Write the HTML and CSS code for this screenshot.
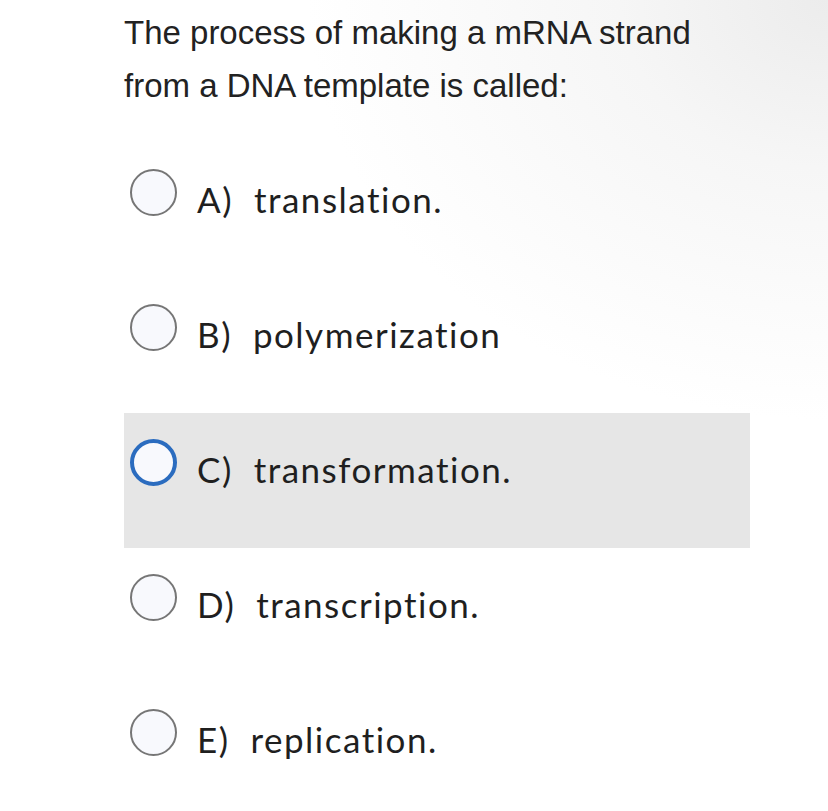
FILE: index.html
```html
<!DOCTYPE html>
<html>
<head>
<meta charset="utf-8">
<link rel="stylesheet" href="styles.css">
</head>
<body>
<div class="page">
  <p class="question">The process of making a mRNA strand<br>from a DNA template is called:</p>
  <ul class="options">
    <li class="option"><span class="radio"></span><span class="label">A)&nbsp; translation.</span></li>
    <li class="option"><span class="radio"></span><span class="label">B)&nbsp; polymerization</span></li>
    <li class="option selected"><span class="radio"></span><span class="label">C)&nbsp; transformation.</span></li>
    <li class="option"><span class="radio"></span><span class="label">D)&nbsp; transcription.</span></li>
    <li class="option"><span class="radio"></span><span class="label">E)&nbsp; replication.</span></li>
  </ul>
</div>
</body>
</html>
```
FILE: styles.css
```css
html, body {
  margin: 0;
  padding: 0;
}
body {
  width: 828px;
  height: 811px;
  overflow: hidden;
  background: radial-gradient(ellipse 520px 420px at 100% 0%, #ececec 0%, #f6f6f6 40%, #ffffff 100%);
}
.page {
  padding-left: 124px;
  width: 626px;
}
.question {
  margin: 0;
  padding-top: 6px;
  font-family: "Liberation Sans", Arial, sans-serif;
  font-size: 33px;
  line-height: 53px;
  color: #222222;
}
.options {
  list-style: none;
  margin: 31px 0 0 0;
  padding: 0;
}
.option {
  height: 135px;
  box-sizing: border-box;
  padding: 26px 6px 0 6px;
  display: flex;
  align-items: flex-start;
}
.option.selected {
  background: #e6e6e6;
}
.radio {
  width: 47px;
  height: 47px;
  box-sizing: border-box;
  border-radius: 50%;
  border: 2px solid #767676;
  background: #f8f9fd;
  flex: none;
}
.selected .radio {
  border: 4px solid #2b6cbf;
}
.label {
  margin-left: 20px;
  margin-top: 7px;
  font-family: Lato, "Open Sans", sans-serif;
  font-size: 35px;
  letter-spacing: 1.5px;
  line-height: 47px;
  color: #1f1f1f;
}
```
